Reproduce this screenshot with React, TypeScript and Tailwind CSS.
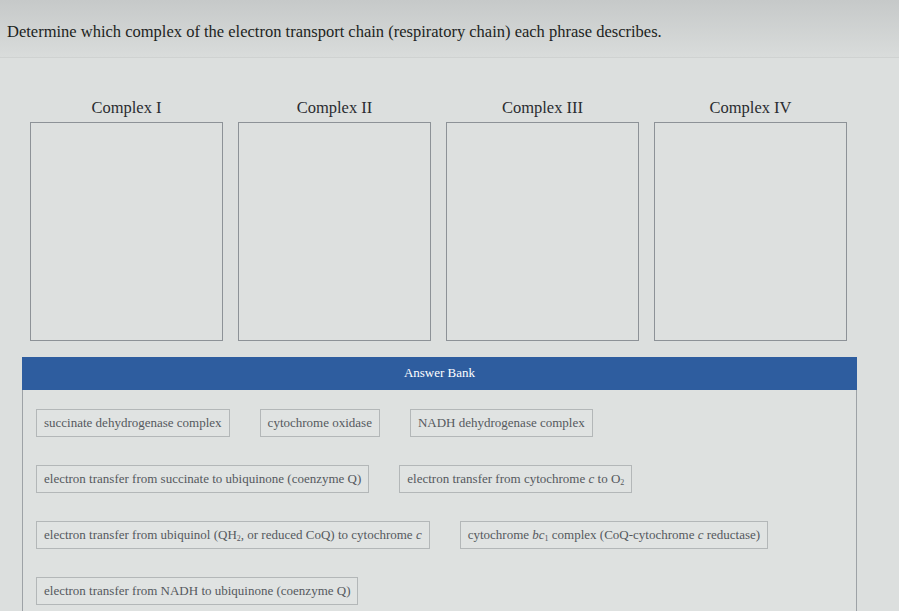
import React from 'react';

const columns = ['Complex I', 'Complex II', 'Complex III', 'Complex IV'];

type Chip = { key: string; label: React.ReactNode };

const rows: Chip[][] = [
    [
        { key: 'sdh', label: 'succinate dehydrogenase complex' },
        { key: 'cox', label: 'cytochrome oxidase' },
        { key: 'nadh', label: 'NADH dehydrogenase complex' },
    ],
    [
        { key: 'succ-q', label: 'electron transfer from succinate to ubiquinone (coenzyme Q)' },
        {
            key: 'cytc-o2',
            label: (
                <>
                    electron transfer from cytochrome <i>c</i> to O<sub className="text-[8px]">2</sub>
                </>
            ),
        },
    ],
    [
        {
            key: 'qh2-cytc',
            label: (
                <>
                    electron transfer from ubiquinol (QH<sub className="text-[8px]">2</sub>, or reduced CoQ) to cytochrome <i>c</i>
                </>
            ),
        },
        {
            key: 'bc1',
            label: (
                <>
                    cytochrome <i>bc</i><sub className="text-[8px]">1</sub> complex (CoQ-cytochrome <i>c</i> reductase)
                </>
            ),
        },
    ],
    [{ key: 'nadh-q', label: 'electron transfer from NADH to ubiquinone (coenzyme Q)' }],
];

export default function App() {
    return (
        <div className="min-h-screen w-full bg-[#dcdfde] font-['Liberation_Serif',serif] overflow-hidden">
            {/* Prompt */}
            <div className="h-[58px] bg-gradient-to-b from-[#c6c9c9] to-[#d9dcdb] border-b border-[#cfd2d1] pt-[24px] pl-[7px]">
                <p className="text-[16.5px] leading-none text-[#1d1f22]">
                    Determine which complex of the electron transport chain (respiratory chain) each phrase describes.
                </p>
            </div>

            {/* Drop targets */}
            <div className="grid grid-cols-4 gap-x-[15px] pl-[30px] pr-[52px] pt-[42px]">
                {columns.map(c => (
                    <div key={c} className="flex flex-col items-center">
                        <div className="text-[16.5px] leading-none text-[#2a2c30] mb-[5px]">{c}</div>
                        <div className="w-full h-[219px] border border-[#8d9297] bg-[#dde0df]" />
                    </div>
                ))}
            </div>

            {/* Answer bank */}
            <div className="mx-[22px] mt-[16px] w-[835px]">
                <div className="h-[33px] bg-[#2e5d9f] flex items-center justify-center">
                    <span className="text-[13px] text-white">Answer Bank</span>
                </div>
                <div className="border-l border-r border-[#9da2a6] bg-[#dee1e0] pl-[13px] pt-[19px] pb-[20px] flex flex-col gap-[28px]">
                    {rows.map((row, i) => (
                        <div key={i} className="flex gap-[30px]">
                            {row.map(chip => (
                                <div
                                    key={chip.key}
                                    className="h-[28px] px-[7px] flex items-center border border-[#b3b7b8] bg-[#e0e3e2] text-[13px] text-[#55595e] whitespace-nowrap"
                                >
                                    <span>{chip.label}</span>
                                </div>
                            ))}
                        </div>
                    ))}
                </div>
            </div>
        </div>
    );
}
